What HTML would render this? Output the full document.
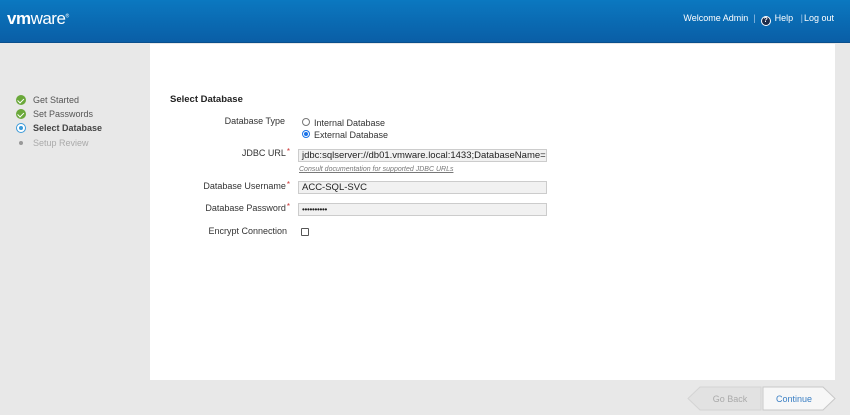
<!DOCTYPE html>
<html><head><meta charset="utf-8"><style>
*{margin:0;padding:0;box-sizing:border-box}
body{width:850px;height:415px;background:#e8e8e8;font-family:"Liberation Sans",Arial,sans-serif;position:relative;overflow:hidden;font-size:9px;color:#333}
#hdr{position:absolute;left:0;top:0;width:850px;height:43px;background:linear-gradient(#0b78c0,#0a5ea6);border-bottom:1px solid #0a4f8c}
#logo{position:absolute;left:7px;top:9px;color:#fff;font-size:17px;letter-spacing:-0.5px}
#logo b{font-weight:bold}
#nav{position:absolute;right:16px;top:13px;color:#fff;font-size:9px}
#nav .sep{color:#9cc3e6;margin:0 5px}
#nav .q{display:inline-block;width:10px;height:10px;border-radius:50%;background:#1c2b4a;border:1px solid #fff;color:#fff;font-size:7px;text-align:center;line-height:8px;font-weight:bold;vertical-align:-1px;margin-right:4px}
#panel{position:absolute;left:150px;top:44px;width:685px;height:336px;background:#fff}
.step{position:absolute;left:16px;font-size:9px;color:#555}
.step i{position:absolute;left:0;top:0;width:10px;height:10px;border-radius:50%}
.step span{position:absolute;left:17px;top:0;white-space:nowrap;line-height:10px}
.ok i{background:#6aa83a}
.ok i:after{content:"";position:absolute;left:3px;top:1.5px;width:2.5px;height:4.5px;border:solid #fff;border-width:0 1.5px 1.5px 0;transform:rotate(45deg)}
.cur i{border:1.5px solid #3a9ad9;background:#fff}
.cur i:after{content:"";position:absolute;left:1.5px;top:1.5px;width:4px;height:4px;border-radius:50%;background:#3a9ad9}
.cur span{font-weight:bold;color:#444}
.dis i{left:3px;top:3px;width:4px;height:4px;background:#999}
.dis span{color:#aaa}
.lbl{position:absolute;text-align:right;width:133px;left:157px;font-size:9px;color:#333;white-space:nowrap}
.lbl em{color:#c33;font-size:8px;font-style:normal;position:relative;top:-2px;margin-left:1px}
.inp{position:absolute;left:298px;width:249px;height:13px;background:#f1f1f1;border:1px solid #ccc;font-size:9.5px;padding-left:3px;line-height:11px;overflow:hidden;white-space:nowrap;color:#222}
.rad{position:absolute;left:302px;width:8px;height:8px;border-radius:50%;border:1px solid #777;background:#fff}
.rad.on{border-color:#1a73e8}
.rad.on:after{content:"";position:absolute;left:1px;top:1px;width:4px;height:4px;border-radius:50%;background:#1a73e8}
</style></head><body>
<div id="hdr"><div id="logo"><b>vm</b>ware<sup style="font-size:5px">®</sup></div>
<div id="nav">Welcome Admin<span class="sep">|</span><span class="q">?</span>Help <span class="sep" style="margin-right:1px">|</span>Log out</div></div>
<div class="step ok" style="top:95px"><i></i><span>Get Started</span></div>
<div class="step ok" style="top:109px"><i></i><span>Set Passwords</span></div>
<div class="step cur" style="top:123px"><i></i><span>Select Database</span></div>
<div class="step dis" style="top:138px"><i></i><span>Setup Review</span></div>
<div id="panel"></div>
<div style="position:absolute;left:170px;top:94px;font-weight:bold;font-size:9.5px;color:#222">Select Database</div>
<div class="lbl" style="top:116px;left:152px">Database Type</div>
<div class="rad" style="top:118px"></div><div style="position:absolute;left:314px;top:118px">Internal Database</div>
<div class="rad on" style="top:130px"></div><div style="position:absolute;left:314px;top:130px">External Database</div>
<div class="lbl" style="top:148px">JDBC URL<em>*</em></div>
<div class="inp" style="top:149px">jdbc:sqlserver://db01.vmware.local:1433;DatabaseName=ONE</div>
<div style="position:absolute;left:299px;top:166px;font-size:7px;font-style:italic;color:#777;text-decoration:underline">Consult documentation for supported JDBC URLs</div>
<div class="lbl" style="top:181px">Database Username<em>*</em></div>
<div class="inp" style="top:181px">ACC-SQL-SVC</div>
<div class="lbl" style="top:203px">Database Password<em>*</em></div>
<div class="inp" style="top:203px;font-size:8px;letter-spacing:-0.3px;line-height:11px">••••••••••</div>
<div class="lbl" style="top:226px;left:154px">Encrypt Connection</div>
<div style="position:absolute;left:301px;top:228px;width:8px;height:8px;border:1px solid #555;border-radius:1px;background:#fff"></div>
<svg style="position:absolute;left:686px;top:386px" width="152" height="25">
<polygon points="2,12.5 14,1 75,1 75,24 14,24" fill="#e2e2e2" stroke="#d4d4d4"/>
<polygon points="77,1 137,1 149,12.5 137,24 77,24" fill="#f7f7f7" stroke="#c8c8c8"/>
<text x="44" y="16" font-family="Liberation Sans" font-size="9" fill="#aaa" text-anchor="middle">Go Back</text>
<text x="108" y="16" font-family="Liberation Sans" font-size="9" fill="#3a7fc4" text-anchor="middle">Continue</text>
</svg>
</body></html>
